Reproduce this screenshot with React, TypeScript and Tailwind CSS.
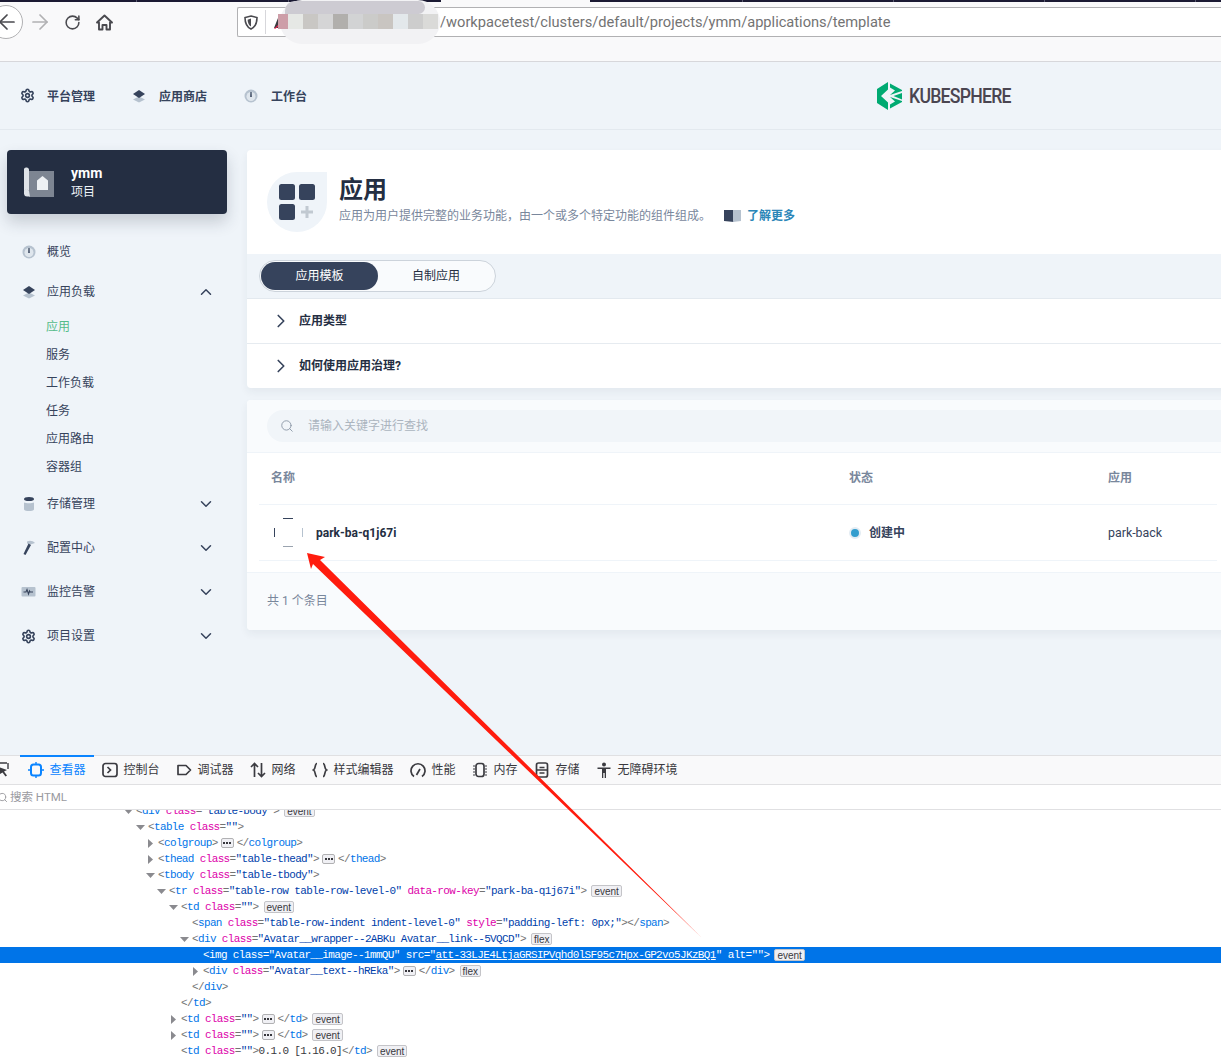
import { ChevronDown, ChevronRight, ChevronUp, RotateCw, Search, ArrowLeft, ArrowRight, Settings } from 'lucide-react';
import type { ReactNode } from 'react';

const cjk = "font-['Roboto','Noto_Sans_CJK_SC',sans-serif]";

const GearIcon = () => <Settings size={15} strokeWidth={2.6} className="text-[#36435c]" />;

const LayersIcon = () => (
  <svg width="14" height="14" viewBox="0 0 14 14">
    <path d="M7 7.500 13 10.500 7 13.500 1 10.500Z" fill="#b6c2cf" />
    <path d="M7 1 13 5 7 9 1 5Z" fill="#36435c" />
  </svg>
);

const DashIcon = () => (
  <svg width="14" height="14" viewBox="0 0 14 14">
    <circle cx="7" cy="7" r="6.500" fill="#b6c2cf" />
    <circle cx="7" cy="7.500" r="4.500" fill="#dfe6ed" />
    <path d="M6.400 3h1.200l.2 5H6.200Z" fill="#36435c" />
  </svg>
);

const DbIcon = () => (
  <svg width="14" height="16" viewBox="0 0 14 16">
    <path d="M2 6.500c2 1 8 1 10 0v7c-1 2-9 2-10 0Z" fill="#b6c2cf" />
    <ellipse cx="7" cy="3" rx="5" ry="2" fill="#36435c" />
  </svg>
);

const HammerIcon = () => (
  <svg width="14" height="16" viewBox="0 0 14 16">
    <path d="M5 1.500c3-1.500 6-.5 8 1.500l-3 1-1.500.5L5 3.500Z" fill="#b6c2cf" />
    <path d="M6.500 3.500 9 5 3.500 15 1.500 14Z" fill="#36435c" />
  </svg>
);

const PulseIcon = () => (
  <svg width="15" height="12" viewBox="0 0 15 12">
    <rect x="0.500" y="1" width="14" height="9.500" rx="1" fill="#b6c2cf" />
    <path d="M2.500 6H5l1-2.500 1.500 4.500 1-3 .5 1h3" stroke="#36435c" strokeWidth="1.100" fill="none" />
  </svg>
);

const ProjectIcon = () => (
  <svg width="30" height="30" viewBox="0 0 30 30">
    <path d="M5 4h25v26H5Z" fill="#7d8592" />
    <path d="M0 3.500a2.500 2.500 0 0 1 5-1V25a2.500 2.500 0 0 0-5 0Z" fill="#dfe3e8" />
    <path d="M0 25a2.500 2.500 0 0 1 5-1l1 5.500H3A3 3 0 0 1 0 27Z" fill="#dfe3e8" />
    <path d="M13 13.500 18.500 9 24 13.500V23H13Z" fill="#eef1f4" />
  </svg>
);

const AppsIcon = () => (
  <svg width="60" height="60" viewBox="0 0 60 60" className="shrink-0">
    <path d="M30 0h30v30a30 30 0 1 1-60 0A30 30 0 0 1 30 0Z" fill="#eff4f9" />
    <rect x="12" y="12" width="16" height="16" rx="2.500" fill="#36435c" />
    <rect x="32" y="12" width="16" height="16" rx="2.500" fill="#36435c" />
    <rect x="12" y="32" width="16" height="16" rx="2.500" fill="#36435c" />
    <path d="M38.500 34h3v4.500H46v3h-4.500V46h-3v-4.500H34v-3h4.500Z" fill="#c1c9d1" />
  </svg>
);

const BookIcon = () => (
  <svg width="17" height="13" viewBox="0 0 17 13">
    <path d="M0 1h10v12L0 12Z" fill="#36435c" />
    <path d="M9 1h8v11L9 13Z" fill="#b6c2cf" />
  </svg>
);

const HomeIcon = () => (
  <svg width="17" height="17" viewBox="0 0 17 17" className="ml-[15px]">
    <path d="M8.500 1.500 16 8.500h-2V15.500H10.500V11h-4v4.500H3V8.500H1Z" fill="none" stroke="#4a4a4f" strokeWidth="1.900" strokeLinejoin="round" />
  </svg>
);

const KubeLogo = () => (
  <svg width="25" height="28" viewBox="0 0 25 28">
    <path d="M0 7 11 0v7.500L4 14l7 6.500V28L0 21Z" fill="#00aa72" />
    <path d="M13 1.500 25 8v1l-12 4 5-4.500-5-3ZM25 11v6.500L16.500 14ZM13 15l12 4v1l-12 6.500v-4l5-3Z" fill="#00aa72" />
  </svg>
);

type NavItem = { label: string; icon: ReactNode; open?: boolean; arrow?: boolean; height: string };

const SideRow = ({ label, icon, open, arrow, height }: NavItem) => (
  <div className={`flex items-center pl-[21px] pr-[32px] text-[12px] text-[#36435c] ${height}`}>
    <span className="flex w-[15px] justify-center">{icon}</span>
    <span className="ml-[11px] flex-1">{label}</span>
    {arrow && (open ? <ChevronUp size={18} strokeWidth={2} /> : <ChevronDown size={18} strokeWidth={2} />)}
  </div>
);

const subItems = ['服务', '工作负载', '任务', '应用路由', '容器组'];

const Sidebar = () => (
  <aside className="w-[247px] shrink-0 pt-[20px]">
    <div className="ml-[7px] flex h-[64px] w-[220px] items-center rounded-[4px] bg-[#242e42] pl-[17px] shadow-[0_8px_16px_0_rgba(36,46,66,0.2)]">
      <ProjectIcon />
      <div className="ml-[17px]">
        <div className="text-[14px] leading-[20px] font-bold text-white">ymm</div>
        <div className="text-[12px] leading-[18px] text-[#eff4f9]">项目</div>
      </div>
    </div>
    <div className="mt-[18px]">
      <SideRow label="概览" icon={<DashIcon />} height="h-[40px]" />
      <SideRow label="应用负载" icon={<LayersIcon />} open arrow height="h-[40px]" />
      <div className="pt-[1px] pb-[1px] pl-[46px] text-[12px] text-[#36435c]">
        <div className="flex h-[28px] items-center text-[#55bc8a]">应用</div>
        {subItems.map((s) => (
          <div key={s} className="flex h-[28px] items-center">
            {s}
          </div>
        ))}
      </div>
      <SideRow label="存储管理" icon={<DbIcon />} arrow height="h-[44px]" />
      <SideRow label="配置中心" icon={<HammerIcon />} arrow height="h-[44px]" />
      <SideRow label="监控告警" icon={<PulseIcon />} arrow height="h-[44px]" />
      <SideRow label="项目设置" icon={<GearIcon />} arrow height="h-[44px]" />
    </div>
  </aside>
);

const Collapse = ({ label, border }: { label: string; border?: boolean }) => (
  <div className={`flex items-center pl-[23px] ${border ? 'h-[45px] border-b border-[#e6ebf0]' : 'h-[44px]'}`}>
    <ChevronRight size={22} strokeWidth={1.8} className="text-[#36435c]" />
    <span className="ml-[7px] text-[12px] font-bold text-[#242e42]">{label}</span>
  </div>
);

const Content = () => (
  <main className="min-w-0 flex-1 pt-[20px]">
    <section className="-mr-[8px] overflow-hidden rounded-[4px] bg-white shadow-[0_4px_8px_0_rgba(36,46,66,0.06)]">
      <div className="flex h-[104px] items-center pl-[20px]">
        <AppsIcon />
        <div className="-mt-[6px] ml-[12px]">
          <h1 className="text-[24px] leading-[32px] font-bold text-[#242e42]">应用</h1>
          <div className="mt-[1px] flex items-center text-[12px] leading-[18px] text-[#79879c]">
            <span>应用为用户提供完整的业务功能，由一个或多个特定功能的组件组成。</span>
            <span className="ml-[13px]">
              <BookIcon />
            </span>
            <span className="ml-[6px] font-bold text-[#2b86b8]">了解更多</span>
          </div>
        </div>
      </div>
      <div className="flex h-[45px] items-center border-b border-[#e3e9ef] bg-[#eff4f9] pl-[12px]">
        <div className="flex h-[32px] w-[237px] items-center rounded-full border border-[#ccd3db] bg-[#f9fbfd] p-[1px] text-[12px]">
          <span className="flex h-[28px] w-[117px] items-center justify-center rounded-full bg-[#36435c] text-white">应用模板</span>
          <span className="flex-1 text-center text-[#242e42]">自制应用</span>
        </div>
      </div>
      <Collapse label="应用类型" border />
      <Collapse label="如何使用应用治理?" />
    </section>

    <section className="-mr-[8px] mt-[12px] overflow-hidden rounded-[4px] bg-white shadow-[0_4px_8px_0_rgba(36,46,66,0.06)]">
      <div className="h-[53px] border-b border-[#eff4f9] bg-[#f9fbfd] pt-[10px] pl-[20px]">
        <div className="flex h-[32px] items-center rounded-l-full bg-[#f1f5f9] pl-[13px] text-[12px] text-[#abb4be]">
          <Search size={14} strokeWidth={1.6} className="text-[#8d99a8]" />
          <span className="ml-[14px]">请输入关键字进行查找</span>
        </div>
      </div>
      <div className="px-[12px] text-[12px]">
        <div className="flex h-[52px] items-center border-b border-[#eff4f9] pb-[2px] font-bold text-[#79879c]">
          <span className="w-[590px] pl-[12px]">名称</span>
          <span className="w-[259px]">状态</span>
          <span>应用</span>
        </div>
        <div className="flex h-[56px] items-center border-b border-[#eff4f9] text-[#242e42]">
          <div className="flex w-[590px] items-center pl-[15px]">
            <span className="relative h-[29px] w-[29px]">
              <span className="absolute top-0 left-[9px] h-px w-[10px] bg-[#36435c]" />
              <span className="absolute bottom-0 left-[9px] h-px w-[10px] bg-[#9aa3af]" />
              <span className="absolute top-[10px] left-0 h-[9px] w-px bg-[#36435c]" />
              <span className="absolute top-[10px] right-0 h-[9px] w-px bg-[#b6c2cf]" />
            </span>
            <span className="ml-[13px] font-bold">park-ba-q1j67i</span>
          </div>
          <div className="flex w-[259px] items-center font-bold text-[#36435c]">
            <span className="h-[12px] w-[12px] rounded-full border-[2px] border-[#e3ecf3] bg-[#329dce]" />
            <span className="ml-[8px]">创建中</span>
          </div>
          <span className="mt-[2px] text-[12.4px] text-[#36435c]">park-back</span>
        </div>
      </div>
      <div className="mt-[11px] flex h-[58px] items-center border-t border-[#eff4f9] bg-[#f9fbfd] pb-[2px] pl-[20px] text-[12px] text-[#79879c]">共 1 个条目</div>
    </section>
  </main>
);

const BrowserBar = () => (
  <div className="h-[62px] border-b border-[#d7d7db] bg-[#f9f9fa]">
    <div className="flex h-[2px] bg-[#1b1a33]">
      <div className="w-[137px] border-r border-[#5a5a70]" />
      <div className="w-[152px] border-r border-[#5a5a70]" />
      <div className="w-[152px]" />
      <div className="w-[149px] bg-[#f9f9fa]" />
      <div className="w-[153px] border-r border-[#5a5a70]" />
      <div className="w-[151px] border-r border-[#5a5a70]" />
      <div className="w-[151px] border-r border-[#5a5a70]" />
      <div className="w-[151px] border-r border-[#5a5a70]" />
    </div>
    <div className="mt-[3px] flex h-[34px] items-center">
      <div className="-ml-[11px] flex h-[34px] w-[34px] shrink-0 items-center justify-center rounded-full border border-[#b1b1b3] bg-white pl-[2px]">
        <ArrowLeft size={24} strokeWidth={1.7} className="shrink-0 text-[#4a4a4f]" />
      </div>
      <ArrowRight size={24} strokeWidth={1.7} className="ml-[5px] text-[#b1b1b3]" />
      <RotateCw size={17} strokeWidth={2.2} className="ml-[12px] text-[#4a4a4f]" />
      <HomeIcon />
      <div className="ml-[124px] flex h-[30px] flex-1 items-center rounded-l-[2px] border border-r-0 border-[#b1b1b3] bg-white pl-[6px]">
        <svg width="14" height="15" viewBox="0 0 14 15">
          <path d="M7 1 13 2.500c0 6-1.500 9.500-6 11.500C2.500 12 1 8.500 1 2.500Z" fill="none" stroke="#4a4a4f" strokeWidth="1.600" />
          <path d="M7 3.500v8c-2.200-1.300-3.200-3.500-3.400-6.800Z" fill="#4a4a4f" />
        </svg>
        <div className="ml-[7px] h-[24px] w-px bg-[#d7d7db]" />
        <span className="mt-[2px] ml-[174px] text-[14.65px] whitespace-nowrap text-[#737373]">/workpacetest/clusters/default/projects/ymm/applications/template</span>
      </div>
    </div>
  </div>
);

const NavBar = () => (
  <div className="flex h-[68px] items-center border-b border-[#e3e9ef] pl-[20px] text-[12px] font-bold text-[#36435c]">
    <span className="flex w-[112px] items-center">
      <GearIcon />
      <span className="mt-[2px] ml-[12px]">平台管理</span>
    </span>
    <span className="flex w-[112px] items-center">
      <LayersIcon />
      <span className="mt-[2px] ml-[13px]">应用商店</span>
    </span>
    <span className="flex w-[112px] items-center">
      <DashIcon />
      <span className="mt-[2px] ml-[13px]">工作台</span>
    </span>
    <span className="ml-[521px] flex items-center">
      <KubeLogo />
      <span className="mt-[2px] ml-[7px] origin-left scale-x-[0.84] text-[21px] font-medium tracking-[-0.9px] whitespace-nowrap text-[#4a4550]">KUBESPHERE</span>
    </span>
  </div>
);

const stroke = { fill: 'none', stroke: '#3b3b40', strokeWidth: 1.7 };

const tabIcons: Record<string, ReactNode> = {
  inspector: (
    <svg width="16" height="16" viewBox="0 0 16 16">
      <rect x="3" y="2.500" width="10" height="11" rx="2.500" fill="none" stroke="#0a84ff" strokeWidth="2" />
      <path d="M8 0v2M8 14v2M0 8h3M13 8h3" stroke="#0a84ff" strokeWidth="1.400" />
    </svg>
  ),
  console: (
    <svg width="16" height="16" viewBox="0 0 16 16">
      <rect x="1" y="1.500" width="14" height="13" rx="2.500" {...stroke} />
      <path d="m5.500 5 3 3-3 3" {...stroke} />
    </svg>
  ),
  debugger: (
    <svg width="16" height="16" viewBox="0 0 16 16">
      <path d="M2 3.500h8l4.500 4.500L10 12.500H2Z" strokeLinejoin="round" {...stroke} />
    </svg>
  ),
  network: (
    <svg width="16" height="16" viewBox="0 0 16 16">
      <path d="M4.500 15V1.500M1 5l3.500-3.500L8 5M11.500 1v13.500M8 11l3.500 3.500L15 11" {...stroke} />
    </svg>
  ),
  style: (
    <svg width="16" height="16" viewBox="0 0 16 16">
      <path d="M5 1.500C2.500 1.500 4 7 1.500 8 4 9 2.500 14.500 5 14.500M11 1.500c2.500 0 1 5.500 3.500 6.500-2.500 1-1 6.500-3.500 6.500" {...stroke} />
    </svg>
  ),
  perf: (
    <svg width="16" height="16" viewBox="0 0 16 16">
      <path d="M4 14.500a7 7 0 1 1 8 0" {...stroke} />
      <path d="M6.500 13 10 7" {...stroke} />
    </svg>
  ),
  memory: (
    <svg width="16" height="16" viewBox="0 0 16 16">
      <rect x="4" y="1.500" width="8" height="13" rx="2.500" {...stroke} />
      <path d="M1 4h2M1 7h2M1 10h2M1 13h2M13 4h2M13 7h2M13 10h2M13 13h2" stroke="#3b3b40" strokeWidth="1" />
    </svg>
  ),
  storage: (
    <svg width="16" height="16" viewBox="0 0 16 16">
      <rect x="2.500" y="1" width="11" height="14" rx="2" {...stroke} />
      <path d="M5.500 5.500h5M2.500 8h11M5.500 11h5" stroke="#3b3b40" strokeWidth="1.400" />
    </svg>
  ),
  a11y: (
    <svg width="16" height="16" viewBox="0 0 16 16">
      <circle cx="8" cy="2.500" r="2" fill="#3b3b40" />
      <path d="M1.500 5.500h13v1.600H10V16H8.700v-5H7.300v5H6V7.100H1.500Z" fill="#3b3b40" />
    </svg>
  ),
};

const tabs = [
  { key: 'console', label: '控制台', w: 'w-[74px]' },
  { key: 'debugger', label: '调试器', w: 'w-[74px]' },
  { key: 'network', label: '网络', w: 'w-[62px]' },
  { key: 'style', label: '样式编辑器', w: 'w-[98px]' },
  { key: 'perf', label: '性能', w: 'w-[62px]' },
  { key: 'memory', label: '内存', w: 'w-[62px]' },
  { key: 'storage', label: '存储', w: 'w-[62px]' },
  { key: 'a11y', label: '无障碍环境', w: 'w-[98px]' },
];

type Kind = 't' | 'a' | 'v' | 'x' | 'l' | 'b' | 'e' | 'f' | 'd';
type Piece = [Kind, string];
type Row = { x: string; tri?: 'open' | 'closed'; sel?: boolean; pieces: Piece[] };

const pieceClass: Record<string, string> = {
  t: 'text-[#0074e8]',
  a: 'text-[#dd00a9]',
  v: 'text-[#003eaa]',
  x: 'text-[#38383d]',
  b: 'text-[#737373]',
};

const Piece = ({ kind, text, sel }: { kind: Kind; text: string; sel?: boolean }) => {
  if (kind === 'e' || kind === 'f')
    return (
      <span className="ml-[5px] inline-flex h-[12px] items-center rounded-[2px] border border-[#c4c4c8] bg-[#f0f0f4] px-[2px] font-['Liberation_Sans',sans-serif] text-[10px] tracking-normal text-[#38383d]">
        {text}
      </span>
    );
  if (kind === 'd')
    return (
      <span className="mx-[3px] inline-flex h-[10px] w-[13px] items-center justify-center gap-px rounded-[2px] border border-[#b1b1b3] bg-[#f0f0f4]">
        <span className="h-[2px] w-[2px] bg-[#38383d]" />
        <span className="h-[2px] w-[2px] bg-[#38383d]" />
        <span className="h-[2px] w-[2px] bg-[#38383d]" />
      </span>
    );
  if (kind === 'l') return <span className={sel ? 'text-white underline' : 'text-[#003eaa] underline'}>{text}</span>;
  return <span className={sel ? 'text-white' : pieceClass[kind]}>{text}</span>;
};

const open = (tag: string): Piece[] => [['b', '<'], ['t', tag]];
const cls = (v: string): Piece[] => [['x', ' '], ['a', 'class'], ['b', '='], ['v', `"${v}"`]];
const end = (tag: string): Piece[] => [['b', '</'], ['t', tag], ['b', '>']];

const rows: Row[] = [
  { x: 'pl-[136px]', tri: 'open', pieces: [...open('div'), ...cls('table-body'), ['b', '>'], ['e', 'event']] },
  { x: 'pl-[148px]', tri: 'open', pieces: [...open('table'), ...cls(''), ['b', '>']] },
  { x: 'pl-[158px]', tri: 'closed', pieces: [...open('colgroup'), ['b', '>'], ['d', ''], ...end('colgroup')] },
  { x: 'pl-[158px]', tri: 'closed', pieces: [...open('thead'), ...cls('table-thead'), ['b', '>'], ['d', ''], ...end('thead')] },
  { x: 'pl-[158px]', tri: 'open', pieces: [...open('tbody'), ...cls('table-tbody'), ['b', '>']] },
  { x: 'pl-[169px]', tri: 'open', pieces: [...open('tr'), ...cls('table-row table-row-level-0'), ['x', ' '], ['a', 'data-row-key'], ['b', '='], ['v', '"park-ba-q1j67i"'], ['b', '>'], ['e', 'event']] },
  { x: 'pl-[181px]', tri: 'open', pieces: [...open('td'), ...cls(''), ['b', '>'], ['e', 'event']] },
  { x: 'pl-[192px]', pieces: [...open('span'), ...cls('table-row-indent indent-level-0'), ['x', ' '], ['a', 'style'], ['b', '='], ['v', '"padding-left: 0px;"'], ['b', '>'], ...end('span')] },
  { x: 'pl-[192px]', tri: 'open', pieces: [...open('div'), ...cls('Avatar__wrapper--2ABKu Avatar__link--5VQCD'), ['b', '>'], ['f', 'flex']] },
  { x: 'pl-[203px]', sel: true, pieces: [...open('img'), ...cls('Avatar__image--1mmQU'), ['x', ' '], ['a', 'src'], ['b', '='], ['b', '"'], ['l', 'att-33LJE4LtjaGRSIPVqhd0lSF95c7Hpx-GP2vo5JKzBQ1'], ['b', '"'], ['x', ' '], ['a', 'alt'], ['b', '='], ['v', '""'], ['b', '>'], ['e', 'event']] },
  { x: 'pl-[203px]', tri: 'closed', pieces: [...open('div'), ...cls('Avatar__text--hREka'), ['b', '>'], ['d', ''], ...end('div'), ['f', 'flex']] },
  { x: 'pl-[192px]', pieces: end('div') },
  { x: 'pl-[181px]', pieces: end('td') },
  { x: 'pl-[181px]', tri: 'closed', pieces: [...open('td'), ...cls(''), ['b', '>'], ['d', ''], ...end('td'), ['e', 'event']] },
  { x: 'pl-[181px]', tri: 'closed', pieces: [...open('td'), ...cls(''), ['b', '>'], ['d', ''], ...end('td'), ['e', 'event']] },
  { x: 'pl-[181px]', pieces: [...open('td'), ...cls(''), ['b', '>'], ['x', '0.1.0 [1.16.0]'], ...end('td'), ['e', 'event']] },
];

const Twisty = ({ dir }: { dir: 'open' | 'closed' }) => (
  <span className="-ml-[12px] flex w-[12px] items-center">
    <svg width="9" height="9" viewBox="0 0 9 9">
      <path d={dir === 'open' ? 'M0 2h9L4.500 7Z' : 'M2 0v9l5-4.500Z'} fill="#8a8a8f" />
    </svg>
  </span>
);

const DevTools = () => (
  <div className="flex-1 overflow-hidden bg-white">
    <div className="flex h-[30px] items-center border-y border-[#e0e0e2] bg-[#f9f9fa] text-[12px] text-[#38383d]">
      <svg width="12" height="16" viewBox="0 0 12 16" className="-ml-[1px]">
        <path d="M0 1h8M9 1v6" stroke="#3b3b40" strokeWidth="1.400" fill="none" />
        <path d="M0 5l8 3-3 1.500 3 4-1.500 1-3-4L1 12Z" fill="#3b3b40" />
      </svg>
      <div className="relative ml-[9px] flex h-full w-[74px] items-center justify-center text-[#0a84ff]">
        <span className="absolute -top-px left-0 h-[2px] w-full bg-[#0a84ff]" />
        {tabIcons.inspector}
        <span className="ml-[5px]">查看器</span>
      </div>
      {tabs.map((t) => (
        <div key={t.key} className={`flex items-center justify-center ${t.w}`}>
          {tabIcons[t.key]}
          <span className="ml-[5px]">{t.label}</span>
        </div>
      ))}
    </div>
    <div className="flex h-[25px] items-center border-b border-[#e0e0e2] text-[11.5px] text-[#9a9a9f]">
      <Search size={11} className="-ml-[3px]" />
      <span className="mt-[2px] ml-[2px]">搜索 HTML</span>
    </div>
    <div className="overflow-hidden">
      <div className="-mt-[7px] font-['Liberation_Mono',monospace] text-[11px] tracking-[-0.64px]">
        {rows.map((r, i) => (
          <div key={i} className={`flex h-[16px] items-center whitespace-pre ${r.x} ${r.sel ? 'bg-[#0074e8]' : ''}`}>
            {r.tri && <Twisty dir={r.tri} />}
            {r.pieces.map((p, j) => (
              <Piece key={j} kind={p[0]} text={p[1]} sel={r.sel} />
            ))}
          </div>
        ))}
      </div>
    </div>
  </div>
);

// 标注用的红箭头和地址栏打码
const Overlays = () => (
  <>
    <svg width="1221" height="1059" className="pointer-events-none absolute top-0 left-0">
      <path d="M702 938 L320 560 L325 557 L307 553 L311 569 L313 564 Z" fill="#ff1c0e" />
    </svg>
    <svg width="8" height="14" viewBox="0 0 8 14" className="absolute top-[15px] left-[274px]">
      <path d="M0 13 4 3h4v10Z" fill="#3b3b40" />
      <path d="M0 14 6 8v2l-5 4Z" fill="#ff1c4e" />
    </svg>
    <div className="absolute top-0 left-[280px] h-[44px] w-[160px] rounded-[24px] bg-[#f2f2f4]" />
    <div className="absolute top-[1px] left-[285px] h-[13px] w-[140px] rounded-tl-[30px] rounded-r-[20px] bg-[#cdcbd2]" />
    <div className="absolute top-[14px] left-[278px] flex h-[15px]">
      {['#cd9ea8', '#e6e8e5', '#c9c7c4', '#d5d5d6', '#b1afac', '#d2d3d4', '#cbcbc9', '#c9c5c1', '#e3e8eb', '#cdcdcd', '#dadad8'].map((c, i) => (
        <span key={i} className={`h-[15px] ${i === 0 ? 'w-[10px]' : 'w-[15px]'}`} style={{ backgroundColor: c }} />
      ))}
    </div>
  </>
);

export default function App() {
  return (
    <div className={`relative flex h-[1059px] w-[1221px] flex-col overflow-hidden bg-[#eff4f9] ${cjk}`}>
      <BrowserBar />
      <NavBar />
      <div className="flex h-[625px] shrink-0">
        <Sidebar />
        <Content />
      </div>
      <DevTools />
      <Overlays />
    </div>
  );
}
